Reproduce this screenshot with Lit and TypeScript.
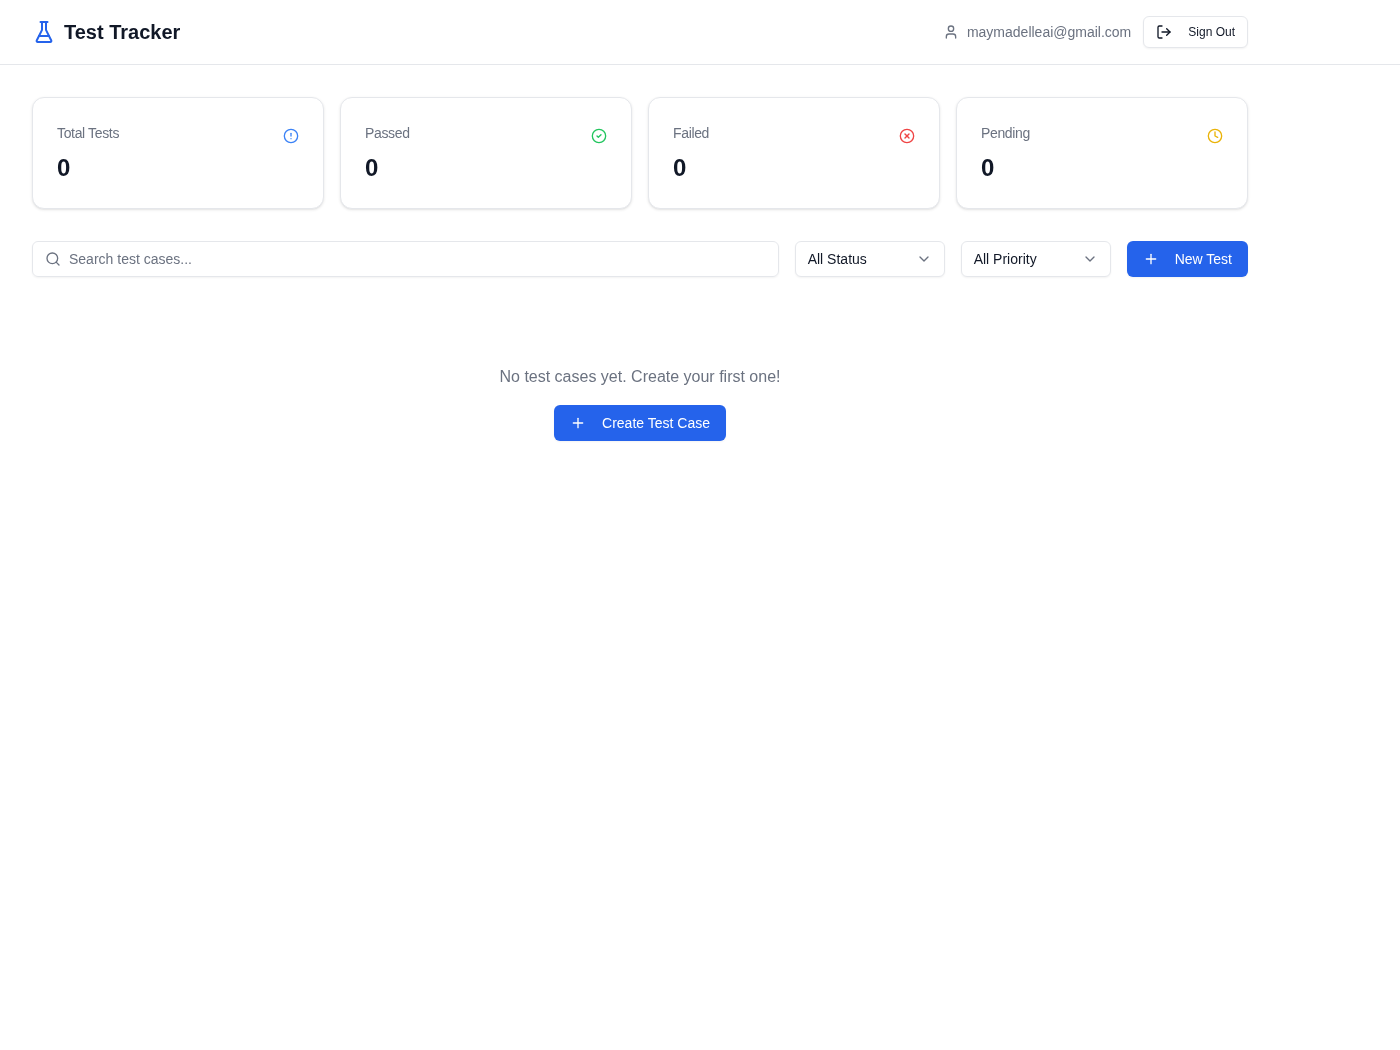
import { LitElement, html, css, svg } from 'lit';
import { customElement } from 'lit/decorators.js';

const icon = (body: unknown, size = 16, cls = '') => html`<svg
  class=${cls}
  width=${size}
  height=${size}
  viewBox="0 0 24 24"
  fill="none"
  stroke="currentColor"
  stroke-width="2"
  stroke-linecap="round"
  stroke-linejoin="round"
>${body}</svg>`;

const flask = svg`<path d="M10 2v7.527a2 2 0 0 1-.211.896L4.72 20.55a1 1 0 0 0 .9 1.45h12.76a1 1 0 0 0 .9-1.45l-5.069-10.127A2 2 0 0 1 14 9.527V2"/><path d="M8.5 2h7"/><path d="M7 16h10"/>`;
const user = svg`<path d="M19 21v-2a4 4 0 0 0-4-4H9a4 4 0 0 0-4 4v2"/><circle cx="12" cy="7" r="4"/>`;
const logOut = svg`<path d="M9 21H5a2 2 0 0 1-2-2V5a2 2 0 0 1 2-2h4"/><polyline points="16 17 21 12 16 7"/><line x1="21" x2="9" y1="12" y2="12"/>`;
const search = svg`<circle cx="11" cy="11" r="8"/><path d="m21 21-4.3-4.3"/>`;
const chevron = svg`<path d="m6 9 6 6 6-6"/>`;
const plus = svg`<path d="M5 12h14"/><path d="M12 5v14"/>`;
const alert = svg`<circle cx="12" cy="12" r="10"/><line x1="12" x2="12" y1="8" y2="12"/><line x1="12" x2="12.01" y1="16" y2="16"/>`;
const check = svg`<circle cx="12" cy="12" r="10"/><path d="m9 12 2 2 4-4"/>`;
const cross = svg`<circle cx="12" cy="12" r="10"/><path d="m15 9-6 6"/><path d="m9 9 6 6"/>`;
const clock = svg`<circle cx="12" cy="12" r="10"/><polyline points="12 6 12 12 16 14"/>`;

const stats = [
  { label: 'Total Tests', value: 0, icon: alert, cls: 'blue' },
  { label: 'Passed', value: 0, icon: check, cls: 'green' },
  { label: 'Failed', value: 0, icon: cross, cls: 'red' },
  { label: 'Pending', value: 0, icon: clock, cls: 'yellow' },
];

@customElement('app-root')
export class AppRoot extends LitElement {
  static styles = css`
    :host {
      display: block;
      min-height: 1050px;
      color: #111827;
      font-family: 'Liberation Sans', Arial, sans-serif;
      will-change: transform;
    }

    * {
      box-sizing: border-box;
    }

    svg {
      display: block;
      flex: none;
    }

    button {
      font-family: inherit;
      cursor: pointer;
    }

    header {
      height: 65px;
      border-bottom: 1px solid #e5e7eb;
    }

    .header-inner {
      width: 1280px;
      height: 64px;
      padding: 0 32px;
      display: flex;
      align-items: center;
      justify-content: space-between;
    }

    .brand {
      display: flex;
      align-items: center;
      gap: 8px;
    }

    .brand svg {
      color: #2563eb;
    }

    .brand h1 {
      margin: 0;
      font-size: 20px;
      line-height: 28px;
      font-weight: 700;
    }

    .account {
      display: flex;
      align-items: center;
      gap: 12px;
    }

    .email {
      display: flex;
      align-items: center;
      gap: 8px;
      font-size: 14px;
      line-height: 20px;
      color: #6b7280;
    }

    .sign-out {
      height: 32px;
      padding: 0 12px;
      display: flex;
      align-items: center;
      gap: 16px;
      background: #fff;
      border: 1px solid #e5e7eb;
      border-radius: 6px;
      box-shadow: 0 1px 2px rgba(0, 0, 0, 0.05);
      color: #111827;
      font-size: 12px;
    }

    main {
      width: 1280px;
      padding: 32px;
    }

    .stats {
      display: grid;
      grid-template-columns: repeat(4, 1fr);
      gap: 16px;
      margin-bottom: 32px;
    }

    .card {
      height: 112px;
      padding: 24px;
      display: flex;
      justify-content: space-between;
      background: #fff;
      border: 1px solid #e5e7eb;
      border-radius: 12px;
      box-shadow: 0 1px 3px rgba(0, 0, 0, 0.1), 0 1px 2px -1px rgba(0, 0, 0, 0.1);
    }

    .card svg {
      margin-top: 6px;
    }

    .card-text {
      padding-top: 1px;
    }

    .label {
      font-size: 14px;
      line-height: 20px;
      letter-spacing: -0.35px;
      color: #6b7280;
    }

    .value {
      margin-top: 9px;
      font-size: 24px;
      line-height: 32px;
      font-weight: 700;
    }

    .blue {
      color: #3b82f6;
    }

    .green {
      color: #22c55e;
    }

    .red {
      color: #ef4444;
    }

    .yellow {
      color: #eab308;
    }

    .toolbar {
      display: flex;
      gap: 16px;
    }

    .search {
      flex: 1;
      height: 36px;
      padding: 0 12px;
      display: flex;
      align-items: center;
      gap: 8px;
      border: 1px solid #e5e7eb;
      border-radius: 6px;
      box-shadow: 0 1px 2px rgba(0, 0, 0, 0.05);
      color: #6b7280;
    }

    .search input {
      flex: 1;
      min-width: 0;
      padding: 0;
      border: 0;
      outline: 0;
      background: transparent;
      font-family: inherit;
      font-size: 14px;
      color: #111827;
    }

    .search input::placeholder {
      color: #6b7280;
      opacity: 1;
    }

    .select {
      width: 150px;
      height: 36px;
      padding: 0 12px;
      display: flex;
      align-items: center;
      justify-content: space-between;
      background: #fff;
      border: 1px solid #e5e7eb;
      border-radius: 6px;
      box-shadow: 0 1px 2px rgba(0, 0, 0, 0.05);
      color: #111827;
      font-size: 14px;
    }

    .select svg {
      color: #6b7280;
    }

    .primary {
      height: 36px;
      padding: 0 16px;
      display: flex;
      align-items: center;
      gap: 16px;
      background: #2563eb;
      border: 0;
      border-radius: 6px;
      box-shadow: 0 1px 2px rgba(0, 0, 0, 0.05);
      color: #fff;
      font-size: 14px;
    }

    .empty {
      margin-top: 88px;
      display: flex;
      flex-direction: column;
      align-items: center;
      gap: 16px;
    }

    .empty p {
      margin: 0;
      font-size: 16px;
      line-height: 24px;
      color: #6b7280;
    }
  `;

  render() {
    return html`
      <header>
        <div class="header-inner">
          <div class="brand">
            ${icon(flask, 24)}
            <h1>Test Tracker</h1>
          </div>
          <div class="account">
            <div class="email">${icon(user)}<span>maymadelleai@gmail.com</span></div>
            <button class="sign-out">${icon(logOut)}<span>Sign Out</span></button>
          </div>
        </div>
      </header>
      <main>
        <section class="stats">
          ${stats.map(
            (s) => html`
              <div class="card">
                <div class="card-text">
                  <div class="label">${s.label}</div>
                  <div class="value">${s.value}</div>
                </div>
                ${icon(s.icon, 16, s.cls)}
              </div>
            `
          )}
        </section>
        <section class="toolbar">
          <label class="search">
            ${icon(search)}
            <input type="text" placeholder="Search test cases..." />
          </label>
          <button class="select"><span>All Status</span>${icon(chevron)}</button>
          <button class="select"><span>All Priority</span>${icon(chevron)}</button>
          <button class="primary">${icon(plus)}<span>New Test</span></button>
        </section>
        <section class="empty">
          <p>No test cases yet. Create your first one!</p>
          <button class="primary">${icon(plus)}<span>Create Test Case</span></button>
        </section>
      </main>
    `;
  }
}
